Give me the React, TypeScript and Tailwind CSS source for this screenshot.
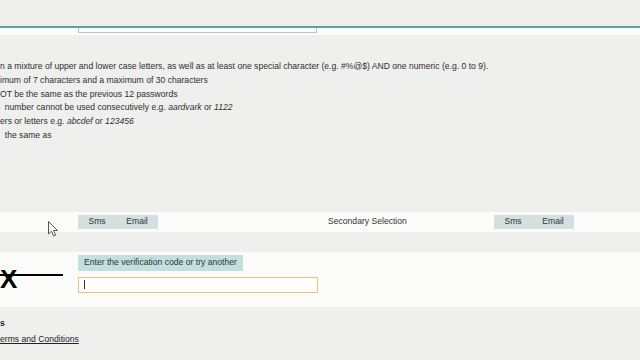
import React from "react";

const font = { fontFamily: '"Liberation Sans", Arial, sans-serif' };

function Tabs() {
  return (
    <div className="flex h-[14px] w-[80px] items-center bg-[#d3dfe1] text-[8.6px] text-[#333]">
      <span className="w-[38px] text-center">Sms</span>
      <span className="w-[42px] text-center">Email</span>
    </div>
  );
}

export default function App() {
  const lines: React.ReactNode[] = [
    <>n a mixture of upper and lower case letters, as well as at least one special character (e.g. #%@$) AND one numeric (e.g. 0 to 9).</>,
    <>imum of 7 characters and a maximum of 30 characters</>,
    <>OT be the same as the previous 12 passwords</>,
    <>
      {"  "}number cannot be used consecutively e.g. <i>aardvark</i> or <i>1122</i>
    </>,
    <>
      ers or letters e.g. <i>abcdef</i> or <i>123456</i>
    </>,
    <>{"  "}the same as</>,
  ];
  return (
    <div
      className="relative h-[360px] w-[640px] overflow-hidden bg-[#efefed] text-[#2e2e2e]"
      style={font}
    >
      <div className="h-[26px]" />
      <div className="h-[2px] bg-[#5d9fa2]" />
      <div className="h-[7px] bg-[#fafcfb]">
        <div className="ml-[78px] h-[5px] w-[239px] border-x border-b border-[#b9c3c6]" />
      </div>

      <div className="pt-[25px] text-[8.6px] leading-[13.8px]">
        {lines.map((l, i) => (
          <div key={i} className="whitespace-pre">
            {l}
          </div>
        ))}
      </div>

      <div className="mt-[69px] flex h-[20px] items-center bg-[#fbfcfa]">
        <div className="w-[78px]" />
        <Tabs />
        <div className="w-[170px]" />
        <div className="w-[166px] text-[8.6px] text-[#333]">Secondary Selection</div>
        <Tabs />
      </div>

      <div className="mt-[20px] flex h-[55px] bg-[#fbfcfa]">
        <div className="relative w-[78px]">
          <div className="absolute left-0 top-[22px] h-[2px] w-[63px] bg-black" />
          <div className="absolute left-0 top-[14px] text-[26px] font-bold leading-[26px] text-black">
            X
          </div>
        </div>
        <div className="flex flex-col pt-[3px]">
          <div className="flex h-[16px] w-[165px] items-center bg-[#c3dfe0] px-[6px] text-[8.6px] text-[#333]">
            Enter the verification code or try another
          </div>
          <div className="mt-[6px] flex h-[16px] w-[240px] items-center border border-[#e9c47e] bg-white px-[5px]">
            <div className="h-[9px] w-px bg-[#333]" />
          </div>
        </div>
      </div>

      <div className="pt-[8px] text-[8.6px] leading-[16.5px]">
        <div className="font-bold text-[#222]">s</div>
        <div className="text-[#222] underline">erms and Conditions</div>
      </div>

      <svg
        className="absolute left-[48px] top-[221px]"
        width="11"
        height="17"
        viewBox="0 0 11 17"
      >
        <path
          d="M0.5 0.5 L0.5 13 L3.5 10.2 L5.6 15 L7.6 14.1 L5.6 9.5 L9.5 9.5 Z"
          fill="#fff"
          stroke="#555"
          strokeWidth="1"
          strokeLinejoin="round"
        />
      </svg>
    </div>
  );
}
